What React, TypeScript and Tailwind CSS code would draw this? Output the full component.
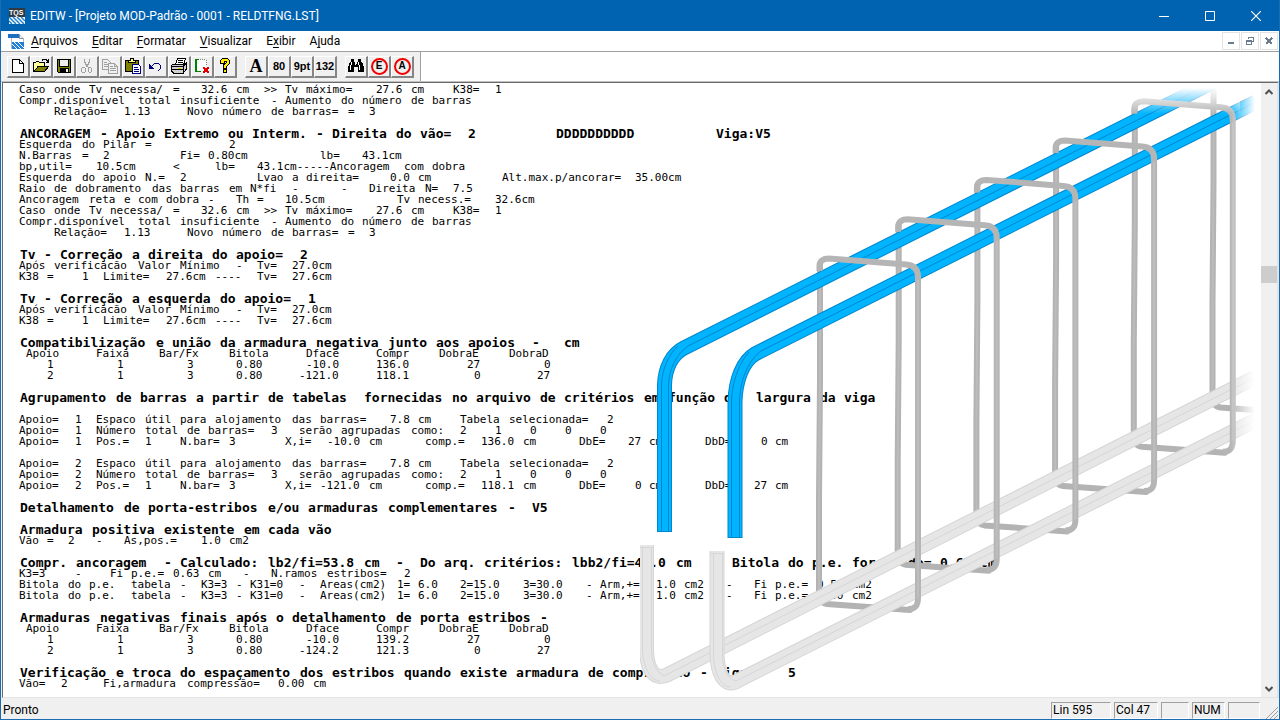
import type { ReactNode } from "react";

type Line = { text: string; bold?: boolean };

const LISTING: Line[] = [
  { text: "Caso onde Tv necessa/ =   32.6 cm  >> Tv máximo=   27.6 cm    K38=  1" },
  { text: "Compr.disponível total insuficiente - Aumento do número de barras" },
  { text: "     Relação=  1.13     Novo número de barras= =  3" },
  { text: "" },
  { text: "ANCORAGEM - Apoio Extremo ou Interm. - Direita do vão=  2          DDDDDDDDDD          Viga:V5", bold: true },
  { text: "Esquerda do Pilar =           2" },
  { text: "N.Barras =  2          Fi= 0.80cm          lb=   43.1cm" },
  { text: "bp,util=   10.5cm     <     lb=   43.1cm-----Ancoragem com dobra" },
  { text: "Esquerda do apoio N.=  2          Lvao a direita=    0.0 cm          Alt.max.p/ancorar= 35.00cm" },
  { text: "Raio de dobramento das barras em N*fi  -      -   Direita N=  7.5" },
  { text: "Ancoragem reta e com dobra -   Th =   10.5cm          Tv necess.=   32.6cm" },
  { text: "Caso onde Tv necessa/ =   32.6 cm  >> Tv máximo=   27.6 cm    K38=  1" },
  { text: "Compr.disponível total insuficiente - Aumento do número de barras" },
  { text: "     Relação=  1.13     Novo número de barras= =  3" },
  { text: "" },
  { text: "Tv - Correção a direita do apoio=  2", bold: true },
  { text: "Após verificacão Valor Mínimo  -  Tv=  27.0cm" },
  { text: "K38 =    1  Limite=  27.6cm ----  Tv=  27.6cm" },
  { text: "" },
  { text: "Tv - Correção a esquerda do apoio=  1", bold: true },
  { text: "Após verificacão Valor Mínimo  -  Tv=  27.0cm" },
  { text: "K38 =    1  Limite=  27.6cm ----  Tv=  27.6cm" },
  { text: "" },
  { text: "Compatibilização e união da armadura negativa junto aos apoios  -   cm", bold: true },
  { text: " Apoio     Faixa    Bar/Fx    Bitola     Dface     Compr    DobraE    DobraD" },
  { text: "    1         1         3      0.80      -10.0     136.0        27         0" },
  { text: "    2         1         3      0.80     -121.0     118.1         0        27" },
  { text: "" },
  { text: "Agrupamento de barras a partir de tabelas  fornecidas no arquivo de critérios em função da  largura da viga", bold: true },
  { text: "" },
  { text: "Apoio=  1  Espaco útil para alojamento das barras=   7.8 cm    Tabela selecionada=  2" },
  { text: "Apoio=  1  Número total de barras=  3   serão agrupadas como:  2    1    0    0    0" },
  { text: "Apoio=  1  Pos.=  1    N.bar= 3       X,i=  -10.0 cm      comp.=  136.0 cm      DbE=   27 cm      DbD=    0 cm" },
  { text: "" },
  { text: "Apoio=  2  Espaco útil para alojamento das barras=   7.8 cm    Tabela selecionada=  2" },
  { text: "Apoio=  2  Número total de barras=  3   serão agrupadas como:  2    1    0    0    0" },
  { text: "Apoio=  2  Pos.=  1    N.bar= 3       X,i= -121.0 cm      comp.=  118.1 cm      DbE=    0 cm      DbD=   27 cm" },
  { text: "" },
  { text: "Detalhamento de porta-estribos e/ou armaduras complementares -  V5", bold: true },
  { text: "" },
  { text: "Armadura positiva existente em cada vão", bold: true },
  { text: "Vão =  2   -   As,pos.=   1.0 cm2" },
  { text: "" },
  { text: "Compr. ancoragem  - Calculado: lb2/fi=53.8 cm  -  Do arq. critérios: lbb2/fi=44.0 cm     Bitola do p.e. for    de= 0.63 cm", bold: true },
  { text: "K3=3    -    Fi p.e.= 0.63 cm   -   N.ramos estribos=  2" },
  { text: "Bitola do p.e.  tabela -  K3=3 - K31=0  -  Areas(cm2) 1= 6.0   2=15.0   3=30.0   - Arm,+=  1.0 cm2   -   Fi p.e.= 0.50 cm2" },
  { text: "Bitola do p.e.  tabela -  K3=3 - K31=0  -  Areas(cm2) 1= 6.0   2=15.0   3=30.0   - Arm,+=  1.0 cm2   -   Fi p.e.= 0.50 cm2" },
  { text: "" },
  { text: "Armaduras negativas finais após o detalhamento de porta estribos -", bold: true },
  { text: " Apoio     Faixa    Bar/Fx    Bitola     Dface     Compr    DobraE    DobraD" },
  { text: "    1         1         3      0.80      -10.0     139.2        27         0" },
  { text: "    2         1         3      0.80     -124.2     121.3         0        27" },
  { text: "" },
  { text: "Verificação e troca do espaçamento dos estribos quando existe armadura de compressão - Viga     5", bold: true },
  { text: "Vão=  2     Fi,armadura compressão=  0.00 cm" },
];

// Column widths of the listing, in pixels
const CELL = 7;
const BOLD_CELL = 8;

const MENUS = [
  ["", "A", "rquivos"],
  ["", "E", "ditar"],
  ["", "F", "ormatar"],
  ["", "V", "isualizar"],
  ["E", "x", "ibir"],
  ["A", "j", "uda"],
];

const Icon = ({ children }: { children: ReactNode }) => (
  <svg width="18" height="18" viewBox="0 0 18 18" fill="none" shapeRendering="crispEdges">
    {children}
  </svg>
);

const NewIcon = () => (
  <Icon>
    <path d="M3.5 2.5h7l4 4v9h-11z" fill="#fff" stroke="#000" />
    <path d="M10.5 2.5v4h4" stroke="#000" />
  </Icon>
);

const OpenIcon = () => (
  <Icon>
    <path d="M1.5 14.5v-9h2l1-1h2l1 1h5v4" fill="#ff9" stroke="#000" />
    <path d="M2 14.5l4-5h10.5l-4 5z" fill="#808000" stroke="#000" />
    <path d="M9.5 3.5h1v-1h4v1h1v1M16.5 2v4M13.5 5.5h3" stroke="#000" />
  </Icon>
);

const SaveIcon = () => (
  <Icon>
    <path d="M2.5 2.5h13v13h-12l-1-1z" fill="#808000" stroke="#000" />
    <path d="M5 3h8v6H5z" fill="#f0f0f0" />
    <path d="M4.5 3v6.5h9V3" stroke="#000" />
    <path d="M5 11h9v5H5z" fill="#000" />
    <path d="M11 12h2v3h-2z" fill="#f0f0f0" />
  </Icon>
);

const CutIcon = () => (
  <Icon>
    <g stroke="#a0a0a0">
      <path d="M6.5 1.5v3l1 2 1 2 1 2M11.5 1.5v3l-1 2-1 2-2 2" />
      <path d="M4.5 10.5h2l1 1v3l-1 1h-2l-1-1v-3zM10.5 10.5h2l1 1v3l-1 1h-1l-1-1z" />
    </g>
  </Icon>
);

const CopyIcon = () => (
  <Icon>
    <g stroke="#a0a0a0">
      <path d="M1.5 2.5h5l3 3v7h-8zM3 5.5h3M3 7.5h4M3 9.5h4" />
      <path d="M7.5 6.5h6l3 3v7h-9z" fill="#f0f0f0" />
      <path d="M13.5 6.5v3h3M9 9.5h3M9 11.5h6M9 13.5h6" />
    </g>
  </Icon>
);

const PasteIcon = () => (
  <Icon>
    <path d="M1.5 3.5h13v11h-13z" fill="#808000" stroke="#000" />
    <path d="M4.5 5.5v-2h2v-2h3v2h2v2z" fill="#ff6" stroke="#000" />
    <path d="M8.5 7.5h6l2 2v7h-8z" fill="#fff" stroke="#000080" />
    <path d="M10 10.5h4M10 12.5h5M10 14.5h5" stroke="#000080" />
  </Icon>
);

const UndoIcon = () => (
  <Icon>
    <path d="M2 7v5h5z" fill="#000080" />
    <path d="M4.5 9.5l3-3h4l2 2v3l-2 2h-1" stroke="#000080" />
  </Icon>
);

const PrintIcon = () => (
  <Icon>
    <path d="M5.5 7.5l2-6h8l-2 6" fill="#fff" stroke="#000" />
    <path d="M8 3.5h5M7.5 5.5h5" stroke="#000" />
    <path d="M1.5 8.5l2-1.5h11l2-1v6l-3 4h-10l-2-2z" fill="#d0d0d0" stroke="#000" />
    <path d="M2 9.5h11l3-3M13.5 9.5v6M2 12.5h11" stroke="#000" />
    <path d="M8 11h3" stroke="#e0d000" />
  </Icon>
);

const CloseFileIcon = () => (
  <Icon>
    <path d="M4 3h9v10H4z" fill="#fff" />
    <path d="M2 2h4v1H4v11h4v1H2z" fill="#008000" />
    <path d="M7 2h1v1H7zM9 2h1v1H9zM11 2h1v1h-1zM13 3h1v1h-1zM13 5h1v1h-1zM13 7h1v1h-1z" fill="#808080" />
    <path d="M10 10h2v1h2v-1h2v2h-1v2h1v2h-2v-1h-2v1h-2v-2h1v-2h-1z" fill="#e00000" />
  </Icon>
);

const HelpIcon = () => (
  <Icon>
    <path d="M4.5 6.5v-3l2-2h5l2 2v3l-3 3v1.5h-3v-3l3-2.5v-1h-2v2z" fill="#ffee00" stroke="#000" />
    <path d="M7.5 12.5h3v3h-3z" fill="#ffee00" stroke="#000" />
  </Icon>
);

const FindIcon = () => (
  <Icon>
    <path d="M4 2h3v3h1v2h2V5h1V2h3v3h1l2 5v5h-6v-5H7v5H1v-5l2-5h1z" fill="#000" />
    <path d="M4.5 5v3M3.5 8v5M11.5 5v3M12.5 8v5M8.5 7v1" stroke="#fff" />
  </Icon>
);

const CircleLetter = ({ letter }: { letter: string }) => (
  <span className="flex size-[17px] items-center justify-center rounded-full border-2 border-[#f00000] text-[10px] leading-none font-bold">
    {letter}
  </span>
);

const ToolButton = ({ label, children }: { label: string; children: ReactNode }) => (
  <button
    aria-label={label}
    className="flex h-[22px] w-[23px] items-center justify-center border-t border-r-2 border-b-2 border-l border-t-white border-r-[#858585] border-b-[#858585] border-l-white bg-[#f0f0f0] text-[11px] leading-none font-bold"
  >
    {children}
  </button>
);

const TitleBar = () => (
  <header className="flex h-[31px] shrink-0 items-center justify-between bg-[#0063b1] pl-2 text-white">
    <div className="flex items-center gap-[5px]">
      <svg width="16" height="16" viewBox="0 0 16 16">
        <rect width="16" height="9" fill="#303840" />
        <rect y="9" width="16" height="7" fill="#fff" />
        <path d="M0 9l7 7M4 9l7 7M8 9l7 7M12 9l4 4M0 13l3 3" stroke="#2080d0" strokeWidth="1.5" />
        <text x="0" y="7" fontSize="7" fontWeight="bold" fill="#fff" fontFamily="Liberation Sans">
          TQS
        </text>
      </svg>
      <h1 className="text-[12px]">EDITW - [Projeto MOD-Padrão - 0001 - RELDTFNG.LST]</h1>
    </div>
    <div className="flex h-full">
      <button aria-label="Minimizar" className="flex w-[46px] items-center justify-center">
        <svg width="10" height="10" viewBox="0 0 10 10" stroke="#fff">
          <path d="M0 5.5h10" />
        </svg>
      </button>
      <button aria-label="Maximizar" className="flex w-[46px] items-center justify-center">
        <svg width="10" height="10" viewBox="0 0 10 10" stroke="#fff" fill="none">
          <path d="M.5.5h9v9h-9z" />
        </svg>
      </button>
      <button aria-label="Fechar" className="flex w-[46px] items-center justify-center">
        <svg width="10" height="10" viewBox="0 0 10 10" stroke="#fff" strokeWidth="1.2">
          <path d="M0 0l10 10M10 0L0 10" />
        </svg>
      </button>
    </div>
  </header>
);

const ChildButton = ({ label, children }: { label: string; children: ReactNode }) => (
  <button
    aria-label={label}
    className="flex size-[18px] items-center justify-center border border-[#e3e3e3] bg-white"
  >
    <svg width="10" height="10" viewBox="0 0 10 10" fill="none" stroke="#6b7c8f" shapeRendering="crispEdges">
      {children}
    </svg>
  </button>
);

const MenuBar = () => (
  <nav className="flex h-[21px] shrink-0 items-center justify-between border-b border-[#a0a0a0] bg-white pr-px pl-[7px]">
    <div className="flex items-center">
      <svg width="16" height="16" viewBox="0 0 16 16">
        <path d="M3.5 1.5h8l4 4v10h-12z" fill="#fff" stroke="#b0b8c0" />
        <path d="M11.5 1.5v4h4" fill="#e8ecf0" stroke="#8090a0" />
        <rect y="1" width="11" height="4" fill="#1f6fc0" />
        <rect x="4" y="9" width="12" height="7" fill="#1f7fd8" />
        <path d="M4 11l5 5M6 9l7 7M10 9l6 6" stroke="#fff" />
      </svg>
      {MENUS.map(([before, key, after]) => (
        <button key={key + after} className="px-[7px] text-[12px] leading-5">
          {before}
          <span className="underline underline-offset-2">{key}</span>
          {after}
        </button>
      ))}
    </div>
    <div className="flex gap-px">
      <ChildButton label="Minimizar documento">
        <path d="M2 7h6" strokeWidth="2" />
      </ChildButton>
      <ChildButton label="Restaurar documento">
        <path d="M3.5 3V1.5h5v4H7M3 1.5h6M1.5 4.5h5v4h-5zM1 5.5h6" />
      </ChildButton>
      <ChildButton label="Fechar documento">
        <path d="M2 2l6 6M8 2L2 8" strokeWidth="2" />
      </ChildButton>
    </div>
  </nav>
);

const Toolbar = () => (
  <div className="flex h-[30px] shrink-0 border-b border-[#c0c0c0] bg-white">
    <div className="flex items-center gap-2 border-r border-[#a0a0a0] bg-[#f0f0f0] px-[6px]">
      <div className="flex">
        <ToolButton label="Novo"><NewIcon /></ToolButton>
        <ToolButton label="Abrir"><OpenIcon /></ToolButton>
        <ToolButton label="Salvar"><SaveIcon /></ToolButton>
        <ToolButton label="Recortar"><CutIcon /></ToolButton>
        <ToolButton label="Copiar"><CopyIcon /></ToolButton>
        <ToolButton label="Colar"><PasteIcon /></ToolButton>
        <ToolButton label="Desfazer"><UndoIcon /></ToolButton>
        <ToolButton label="Imprimir"><PrintIcon /></ToolButton>
        <ToolButton label="Fechar arquivo"><CloseFileIcon /></ToolButton>
        <ToolButton label="Ajuda"><HelpIcon /></ToolButton>
      </div>
      <div className="flex font-['Liberation_Sans',sans-serif]">
        <ToolButton label="Fonte">
          <span className="font-['Liberation_Serif',serif] text-[18px]">A</span>
        </ToolButton>
        <ToolButton label="80 colunas">80</ToolButton>
        <ToolButton label="9 pontos">9pt</ToolButton>
        <ToolButton label="132 colunas">132</ToolButton>
      </div>
      <div className="flex font-['Liberation_Sans',sans-serif]">
        <ToolButton label="Localizar"><FindIcon /></ToolButton>
        <ToolButton label="Erros"><CircleLetter letter="E" /></ToolButton>
        <ToolButton label="Avisos"><CircleLetter letter="A" /></ToolButton>
      </div>
    </div>
  </div>
);

type BarProps = { d: string; lines: string; fill: string; edge: string };

const Bar = ({ d, lines, fill, edge }: BarProps) => (
  <g fill="none" strokeLinejoin="round">
    <path d={d} stroke={edge} strokeWidth="15" />
    <path d={d} stroke={fill} strokeWidth="13" />
    <path d={lines} stroke={edge} />
  </g>
);

// Each stirrup is the first one shifted along the beam axis
const STIRRUPS = [5, 4, 3, 2, 1, 0];
const shift = (n: number) => `translate(${n * 78.7} ${n * -39.3})`;

const Reinforcement = () => (
  <svg
    className="pointer-events-none absolute top-0 right-0"
    width="621"
    height="614"
    viewBox="640 83 621 614"
    fill="none"
  >
    <defs>
      <linearGradient id="fadeRight">
        <stop offset="0" stopColor="#fff" stopOpacity="0" />
        <stop offset="1" stopColor="#fff" />
      </linearGradient>
      <linearGradient id="fadeTop" x1="0" x2="0" y1="0" y2="1">
        <stop offset="0" stopColor="#fff" />
        <stop offset="1" stopColor="#fff" stopOpacity="0" />
      </linearGradient>
    </defs>

    {STIRRUPS.map((n) => (
      <g key={n} transform={shift(n)} strokeLinecap="round">
        <path d="M820 264V380L819 500V590C819 598 820 603 827 604L910 610" stroke="#b3b3b3" strokeWidth="6" />
        <path d="M820 264V380L819 500V590" stroke="#bcbcbc" strokeWidth="2" />
      </g>
    ))}

    <Bar
      d="M646.5 545V648C646.5 662 650 674 658 676C661 677 665 676 668 674.5L1256 377"
      lines="M642.5 548V650C643 666 650 681 660 681M651.5 548V650C652 664 656 671 664 676L1256 377M640 547.5h13"
      fill="#e6e6e6"
      edge="#d6d6d6"
    />
    <Bar
      d="M717 551V652C717 668 721 681 730 683C733 683.5 736 682 739 680L1256 420"
      lines="M713.5 554V655C714 672 720 687 731 687M722.5 554V655C723 670 727 678 736 681L1256 420M710 553.5h14"
      fill="#e6e6e6"
      edge="#d6d6d6"
    />
    <Bar
      d="M664.5 532V385C665 368 672 354 684 348L1220 78.5"
      lines="M661.5 532V385C662 370 668 355 678 346M668.5 532V385C669 370 676 354 688 346L1220 78.5M658 531.5h13"
      fill="#00b4ff"
      edge="#0086cc"
    />
    <Bar
      d="M735 538V402C735.5 380 743 361 755 354L1256 102"
      lines="M731.5 538V402C732 380 740 362 749 352M739.5 538V402C740 382 746 364 760 351.5L1256 102M728 537.5h14"
      fill="#00b4ff"
      edge="#0086cc"
    />

    {STIRRUPS.map((n) => (
      <g key={n} transform={shift(n)}>
        <path
          d="M819.5 271V266C819.5 261 823 258.5 829 258.5L906 264.5C913 265 918 268 918 277V598C918 606 915 609 908 609"
          stroke="#b5b5b5"
          strokeWidth="6"
        />
        <path d="M918 280V598" stroke="#bebebe" strokeWidth="2" />
      </g>
    ))}

    <rect x="1128" y="83" width="133" height="5" fill="#fff" />
    <rect x="1128" y="88" width="112" height="26" fill="url(#fadeTop)" />
    <rect x="1230" y="83" width="25" height="400" fill="url(#fadeRight)" />
    <rect x="1255" y="83" width="6" height="400" fill="#fff" />
  </svg>
);

const ScrollBar = () => (
  <div className="flex w-4 shrink-0 flex-col items-center bg-[#f0f0f0]">
    <button aria-label="Rolar para cima" className="flex h-[17px] w-full items-center justify-center">
      <svg width="8" height="6" viewBox="0 0 8 6" fill="none" stroke="#505050" strokeWidth="2">
        <path d="M.5 5L4 1.5 7.5 5" />
      </svg>
    </button>
    <div className="flex-[5]" />
    <div className="h-[17px] w-full bg-[#cdcdcd]" />
    <div className="flex-[12]" />
    <button aria-label="Rolar para baixo" className="flex h-[17px] w-full items-center justify-center">
      <svg width="8" height="6" viewBox="0 0 8 6" fill="none" stroke="#505050" strokeWidth="2">
        <path d="M.5 1L4 4.5 7.5 1" />
      </svg>
    </button>
  </div>
);

// Every word starts on its own column of the character grid
const ListingLine = ({ text, bold }: Line) => {
  const words = text.match(/^\s+|\S+\s*/g) ?? [];
  const cell = bold ? BOLD_CELL : CELL;

  return (
    <p
      className={
        bold
          ? "flex h-[11px] pl-[17px] text-[13px] leading-[11px] font-bold whitespace-pre"
          : "flex h-[11px] pl-4 text-[11px] leading-[11px] whitespace-pre"
      }
    >
      {words.map((word, i) => (
        <span key={i} className="shrink-0" style={{ width: word.length * cell }}>
          {word}
        </span>
      ))}
    </p>
  );
};

const Listing = () => (
  <main className="ml-px flex min-h-0 flex-1 border-t border-r-2 border-b border-l border-t-[#696969] border-r-[#e3e3e3] border-b-[#e3e3e3] border-l-[#696969] bg-white">
    <div className="relative min-w-0 flex-1 overflow-hidden pt-px font-['DejaVu_Sans_Mono',monospace]">
      {LISTING.map((line, i) => (
        <ListingLine key={i} {...line} />
      ))}
      <Reinforcement />
    </div>
    <ScrollBar />
  </main>
);

const StatusBar = () => {
  const cell = "h-[17px] border border-t-[#a0a0a0] border-r-white border-b-white border-l-[#a0a0a0] px-px leading-[15px]";

  return (
    <footer className="flex h-[21px] shrink-0 items-end justify-between bg-[#f0f0f0] pl-[2px] text-[12px]">
      <span className="leading-[17px]">Pronto</span>
      <div className="flex items-end gap-[3px]">
        <span className={`${cell} w-[60px]`}>Lin 595</span>
        <span className={`${cell} w-[44px]`}>Col 47</span>
        <span className={`${cell} w-[28px]`} />
        <span className={`${cell} w-[33px]`}>NUM</span>
        <span className={`${cell} w-[32px]`} />
        <svg width="16" height="14" viewBox="0 0 16 14" stroke="#a0a0a0">
          <path d="M3 14L15 2M7 14l8-8M11 14l4-4" />
        </svg>
      </div>
    </footer>
  );
};

export default function App() {
  return (
    <div className="flex h-screen flex-col border border-t-0 border-[#1a6cb0] bg-[#f0f0f0] font-[Roboto,sans-serif] text-black">
      <TitleBar />
      <MenuBar />
      <Toolbar />
      <Listing />
      <StatusBar />
    </div>
  );
}
